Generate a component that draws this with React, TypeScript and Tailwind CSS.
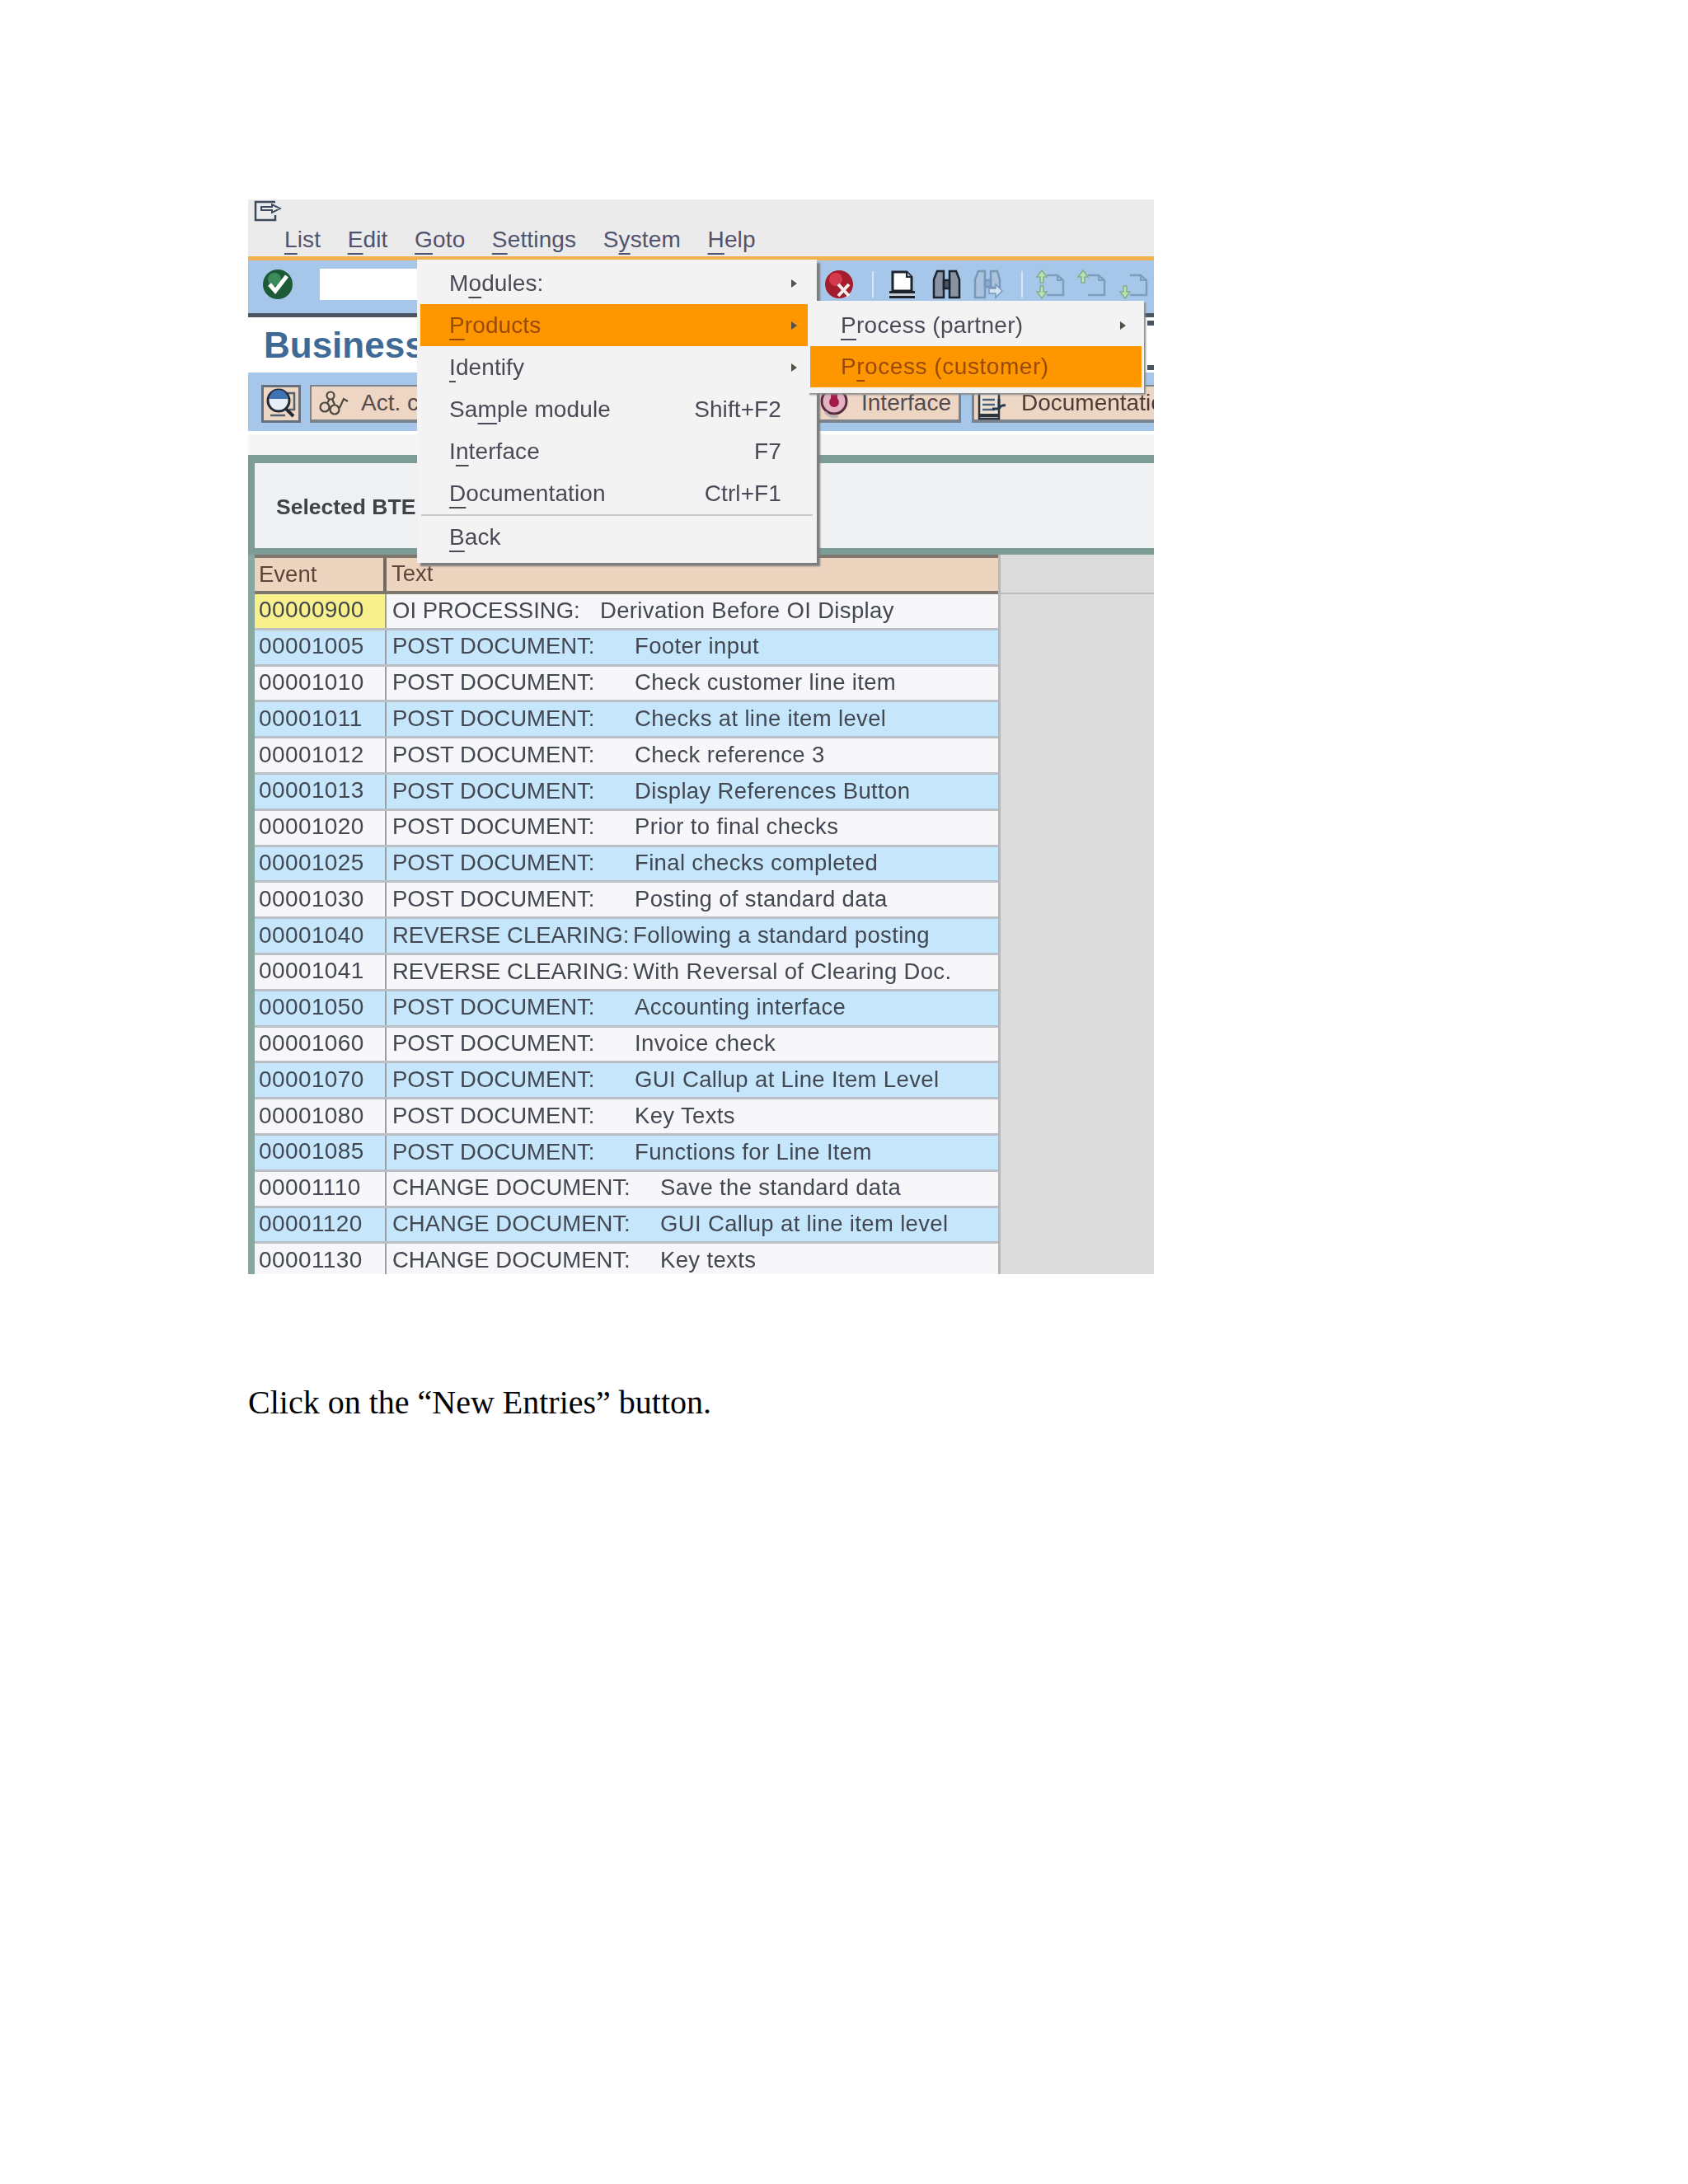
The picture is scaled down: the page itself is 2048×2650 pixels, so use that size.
import React from "react";

const rows = [
  { id: "00000900", label: "OI PROCESSING:", text: "Derivation Before OI Display", w: "w-[252px]", bg: "bg-[#f7f7f9]", idBg: "bg-[#f7f08c]" },
  { id: "00001005", label: "POST DOCUMENT:", text: "Footer input", w: "w-[294px]", bg: "bg-[#c6e7fb]", idBg: "" },
  { id: "00001010", label: "POST DOCUMENT:", text: "Check customer line item", w: "w-[294px]", bg: "bg-[#f7f7f9]", idBg: "" },
  { id: "00001011", label: "POST DOCUMENT:", text: "Checks at line item level", w: "w-[294px]", bg: "bg-[#c6e7fb]", idBg: "" },
  { id: "00001012", label: "POST DOCUMENT:", text: "Check reference 3", w: "w-[294px]", bg: "bg-[#f7f7f9]", idBg: "" },
  { id: "00001013", label: "POST DOCUMENT:", text: "Display References Button", w: "w-[294px]", bg: "bg-[#c6e7fb]", idBg: "" },
  { id: "00001020", label: "POST DOCUMENT:", text: "Prior to final checks", w: "w-[294px]", bg: "bg-[#f7f7f9]", idBg: "" },
  { id: "00001025", label: "POST DOCUMENT:", text: "Final checks completed", w: "w-[294px]", bg: "bg-[#c6e7fb]", idBg: "" },
  { id: "00001030", label: "POST DOCUMENT:", text: "Posting of standard data", w: "w-[294px]", bg: "bg-[#f7f7f9]", idBg: "" },
  { id: "00001040", label: "REVERSE CLEARING:", text: "Following a standard posting", w: "w-[292px]", bg: "bg-[#c6e7fb]", idBg: "" },
  { id: "00001041", label: "REVERSE CLEARING:", text: "With Reversal of Clearing Doc.", w: "w-[292px]", bg: "bg-[#f7f7f9]", idBg: "" },
  { id: "00001050", label: "POST DOCUMENT:", text: "Accounting interface", w: "w-[294px]", bg: "bg-[#c6e7fb]", idBg: "" },
  { id: "00001060", label: "POST DOCUMENT:", text: "Invoice check", w: "w-[294px]", bg: "bg-[#f7f7f9]", idBg: "" },
  { id: "00001070", label: "POST DOCUMENT:", text: "GUI Callup at Line Item Level", w: "w-[294px]", bg: "bg-[#c6e7fb]", idBg: "" },
  { id: "00001080", label: "POST DOCUMENT:", text: "Key Texts", w: "w-[294px]", bg: "bg-[#f7f7f9]", idBg: "" },
  { id: "00001085", label: "POST DOCUMENT:", text: "Functions for Line Item", w: "w-[294px]", bg: "bg-[#c6e7fb]", idBg: "" },
  { id: "00001110", label: "CHANGE DOCUMENT:", text: "Save the standard data", w: "w-[325px]", bg: "bg-[#f7f7f9]", idBg: "" },
  { id: "00001120", label: "CHANGE DOCUMENT:", text: "GUI Callup at line item level", w: "w-[325px]", bg: "bg-[#c6e7fb]", idBg: "" },
  { id: "00001130", label: "CHANGE DOCUMENT:", text: "Key texts", w: "w-[325px]", bg: "bg-[#f7f7f9]", idBg: "" },
];

// underlined mnemonic letter
function Mn({ children }: { children: React.ReactNode }) {
  return <span className="underline decoration-2 underline-offset-[7px]">{children}</span>;
}

function MenuArrow() {
  return <span className="w-0 h-0 border-y-[5px] border-y-transparent border-l-[7px] border-l-[#55504a]" />;
}

function MenuRow({ children, hint, arrow, active }: { children: React.ReactNode; hint?: string; arrow?: boolean; active?: boolean }) {
  return (
    <div className={`flex items-center h-[51px] mx-[4px] pl-[35px] pr-[20px] tracking-[0.1px] ${active ? "bg-[#fe9600] text-[#9a4a08]" : "text-[#4c4956]"}`}>
      <span className="flex-1">{children}</span>
      {hint && <span className="mr-[19px]">{hint}</span>}
      {arrow && <MenuArrow />}
    </div>
  );
}

function ExitIcon() {
  return (
    <svg width="34" height="26" viewBox="0 0 34 26" fill="none" stroke="#3d4a5c" strokeWidth="2.5">
      <path d="M26 2H2v22h24v-6" />
      <path d="M9 8h13V5l10 5-10 5v-3H9z" strokeWidth="2" />
    </svg>
  );
}

function CheckIcon() {
  return (
    <svg width="38" height="38" viewBox="0 0 38 38">
      <circle cx="19" cy="19" r="18" fill="#1c5b36" />
      <circle cx="15" cy="13" r="8" fill="#3d8a5c" />
      <path d="M9 19l7 8L30 9" fill="none" stroke="#fff" strokeWidth="5" />
    </svg>
  );
}

function CancelIcon() {
  return (
    <svg width="36" height="36" viewBox="0 0 36 36">
      <circle cx="18" cy="18" r="17" fill="#a51d2c" />
      <circle cx="14" cy="12" r="8" fill="#d2394a" />
      <path d="M17 18l13 14M30 18L17 32" stroke="#f4f0f0" strokeWidth="4" />
    </svg>
  );
}

function PrintIcon() {
  return (
    <svg width="33" height="36" viewBox="0 0 33 36">
      <path d="M5 3h17l6 6v17H5z" fill="#fff" stroke="#1d2430" strokeWidth="3" />
      <path d="M22 3v6h6" fill="#9fb0c2" stroke="#1d2430" strokeWidth="2" />
      <path d="M1 26h31v3H1z" fill="#1d2430" />
      <path d="M1 29h31v3H1z" fill="#c8ced6" />
      <path d="M1 32h31v3H1z" fill="#1d2430" />
    </svg>
  );
}

function BinocularIcon() {
  return (
    <svg width="35" height="36" viewBox="0 0 35 36" stroke="#1d2430" strokeWidth="2.5">
      <path d="M6 2h8v32H2V12z" fill="#8a93a3" />
      <path d="M21 2h8l4 10v22H21z" fill="#8a93a3" />
      <path d="M14 13h7v10h-7z" fill="#4a5260" />
    </svg>
  );
}

function FindNextIcon() {
  return (
    <svg width="36" height="36" viewBox="0 0 36 36" stroke="#7898ba" strokeWidth="2.5">
      <path d="M6 2h8v32H2V12z" fill="#a9c3dd" />
      <path d="M21 2h8l3 10v10H21z" fill="#a9c3dd" />
      <path d="M14 13h7v8h-7z" fill="#8fabc8" />
      <path d="M19 23h8v-5l8 8-8 8v-5h-8z" fill="#d4e4f2" strokeWidth="1.5" />
    </svg>
  );
}

function PageIcon({ arrow }: { arrow: "both" | "up" | "down" }) {
  return (
    <svg width="36" height="36" viewBox="0 0 36 36" fill="none" stroke="#7c9dbe" strokeWidth="2.5">
      <path d="M14 7h13l7 6v18H14" />
      <path d="M27 7v6h7" strokeWidth="2" />
      {arrow !== "down" && <path d="M8 1L2 9h4v7h4V9h4z" fill="#bfe0b5" stroke="#7fb08a" strokeWidth="1.5" />}
      {arrow !== "up" && <path d="M8 35l-6-8h4v-7h4v7h4z" fill="#bfe0b5" stroke="#7fb08a" strokeWidth="1.5" />}
    </svg>
  );
}

function SearchIcon() {
  return (
    <svg width="38" height="38" viewBox="0 0 38 38" fill="none" stroke="#232a36" strokeWidth="3">
      <path d="M27 6h8v20h-6" strokeWidth="2.5" stroke="#56606c" />
      <circle cx="16" cy="15" r="13" fill="#e8eef6" />
      <path d="M5 13a11 11 0 0 1 22 0z" fill="#3f73b4" stroke="none" />
      <path d="M25 25l9 9" strokeWidth="4" />
      <path d="M6 33h18" strokeWidth="2.5" stroke="#56606c" />
    </svg>
  );
}

function KeysIcon() {
  return (
    <svg width="38" height="32" viewBox="0 0 38 32" fill="none" stroke="#4b4640" strokeWidth="2.2">
      <circle cx="8" cy="21" r="5.5" />
      <circle cx="20" cy="24" r="5.5" />
      <circle cx="15" cy="7" r="4.5" />
      <path d="M11 16l3-5M20 18l-3-7M26 22l5-11 5 3" />
    </svg>
  );
}

function InterfaceIcon() {
  return (
    <svg width="34" height="38" viewBox="0 0 34 38">
      <circle cx="17" cy="17" r="15" fill="#e3b3c2" stroke="#5a2c40" strokeWidth="3" />
      <path d="M13 3h8v12h-8z" fill="#a21c4a" />
      <circle cx="17" cy="18" r="6" fill="#a21c4a" />
      <path d="M6 30a15 15 0 0 0 16 5" fill="none" stroke="#b9b4b4" strokeWidth="3" />
    </svg>
  );
}

function DocIcon() {
  return (
    <svg width="38" height="42" viewBox="0 0 38 42" fill="none" stroke="#2c3440" strokeWidth="2.5">
      <path d="M2 9h24v31H2z" fill="#efe3d6" />
      <path d="M6 17h15M6 23h15M6 29h15" stroke="#4a5f78" />
      <path d="M2 36h24" strokeWidth="4" />
      <path d="M26 1v8" strokeWidth="6" />
      <path d="M18 28h8M26 16v12a7 7 0 0 1 8-4" strokeWidth="3" stroke="#23384f" />
    </svg>
  );
}

export default function App() {
  return (
    <div className="w-[2048px] h-[2650px] bg-white pt-[242px] pl-[301px]">
      {/* screenshot, slightly soft like the scanned original */}
      <div className="relative flex flex-col w-[1099px] h-[1304px] overflow-hidden blur-[0.7px] text-[28px] leading-none font-['Liberation_Sans',Arial,sans-serif]">
        {/* menu bar */}
        <div className="flex flex-col h-[69px] pl-[7px] bg-[#ebebeb]">
          <div className="h-[27px] pt-[1px]">
            <ExitIcon />
          </div>
          <div className="flex gap-[32.5px] pl-[37px] pt-[8px] tracking-[0.15px] text-[#50536e]">
            <span><Mn>L</Mn>ist</span>
            <span><Mn>E</Mn>dit</span>
            <span><Mn>G</Mn>oto</span>
            <span><Mn>S</Mn>ettings</span>
            <span>S<Mn>y</Mn>stem</span>
            <span><Mn>H</Mn>elp</span>
          </div>
        </div>
        <div className="h-[5px] bg-[#f3b04e]" />

        {/* system toolbar */}
        <div className="flex items-center h-[64px] pl-[17px] pb-[6px] bg-[#a6c7e9]">
          <CheckIcon />
          <div className="w-[200px] h-[38px] ml-[32px] shrink-0 bg-white" />
          <div className="ml-[412px]">
            <CancelIcon />
          </div>
          <div className="w-[2px] h-[32px] ml-[22px] shrink-0 bg-[#d8e6f4]" />
          <div className="ml-[18px]"><PrintIcon /></div>
          <div className="ml-[20px]"><BinocularIcon /></div>
          <div className="ml-[15px]"><FindNextIcon /></div>
          <div className="w-[2px] h-[32px] ml-[22px] shrink-0 bg-[#d8e6f4]" />
          <div className="ml-[15px]"><PageIcon arrow="both" /></div>
          <div className="ml-[14px]"><PageIcon arrow="up" /></div>
          <div className="ml-[15px]"><PageIcon arrow="down" /></div>
        </div>
        <div className="h-[5px] bg-[#4a5560]" />

        {/* title */}
        <div className="flex items-center justify-between h-[67px] pl-[19px] bg-white">
          <span className="text-[44px] font-bold text-[#3f6a96]">Business</span>
          <span className="w-[8px] h-[60px] border-y-[6px] border-[#4a5560]" />
        </div>

        {/* application toolbar */}
        <div className="flex items-start h-[71px] pl-[16px] pt-[15px] bg-[#a6c7e9] text-[#57494a]">
          <div className="flex items-center justify-center w-[48px] h-[46px] shrink-0 bg-[#edd6c4] border-[3px] border-[#66707c]">
            <SearchIcon />
          </div>
          <div className="flex items-center w-[200px] h-[46px] ml-[11px] pl-[8px] gap-[14px] shrink-0 bg-[#edd6c4] border-l-[2px] border-t-[2px] border-b-[4px] border-[#7a828c]">
            <KeysIcon />
            <span>Act. c</span>
          </div>
          <div className="flex items-center w-[186px] h-[46px] ml-[404px] pl-[15px] gap-[16px] shrink-0 bg-[#edd6c4] border-r-[3px] border-t-[2px] border-b-[4px] border-[#7a828c]">
            <InterfaceIcon />
            <span>Interface</span>
          </div>
          <div className="flex items-center w-[300px] h-[46px] ml-[13px] pl-[4px] gap-[15px] shrink-0 bg-[#edd6c4] border-l-[3px] border-t-[2px] border-b-[4px] border-[#7a828c] text-[#4f3a36]">
            <DocIcon />
            <span>Documentation</span>
          </div>
        </div>
        <div className="h-[29px] bg-[#f5f5f5] border-t-[4px] border-white" />

        {/* selected BTE panel */}
        <div className="h-[10px] bg-[#7b9d95]" />
        <div className="flex items-center h-[103px] border-l-[8px] border-[#7b9d95] pl-[26px] pt-[4px] bg-[#f0f1f3]">
          <span className="font-bold text-[26.5px] text-[#3f4347]">Selected BTE</span>
        </div>
        <div className="h-[8px] bg-[#7b9d95]" />

        {/* list */}
        <div className="flex flex-1 min-h-0 text-[#424752] text-[27.5px]">
          <div className="w-[910px] shrink-0 border-l-[8px] border-[#86a8a0]">
            <div className="flex h-[48px] bg-[#edd4bf] border-t-[4px] border-b-[4px] border-[#7f776e] text-[#5c463c]">
              <div className="flex items-center w-[160px] pl-[5px] border-r-[4px] border-[#6f6a64]">Event</div>
              <div className="pl-[6px] pt-[5px]">Text</div>
            </div>
            {rows.map((row) => (
              <div key={row.id} className={`flex h-[43.8px] border-b-[3px] border-[#b9bfc4] ${row.bg}`}>
                <div className={`flex items-center w-[160px] pl-[5px] pb-[2px] border-r-[2px] border-[#9a9fa4] text-[28px] tracking-[0.4px] ${row.idBg}`}>{row.id}</div>
                <div className="flex items-center pl-[7px] pb-[2px] whitespace-nowrap">
                  <span className={row.w}>{row.label}</span>
                  <span className="tracking-[0.35px]">{row.text}</span>
                </div>
              </div>
            ))}
          </div>
          <div className="flex-1 bg-[#dcdcdc] border-l-[3px] border-[#b8b8b8]">
            <div className="h-[48px] border-b-[2px] border-[#bcbcbc]" />
          </div>
        </div>

        {/* Goto menu */}
        <div className="absolute left-[205px] top-[73px] flex flex-col w-[485px] h-[368px] pt-[3px] bg-[#f3f3f3] shadow-[4px_4px_2px_#7c7c7c]">
          <MenuRow arrow>M<Mn>o</Mn>dules:</MenuRow>
          <MenuRow arrow active><Mn>P</Mn>roducts</MenuRow>
          <MenuRow arrow><Mn>I</Mn>dentify</MenuRow>
          <MenuRow hint="Shift+F2">Sa<Mn>m</Mn>ple module</MenuRow>
          <MenuRow hint="F7">I<Mn>n</Mn>terface</MenuRow>
          <MenuRow hint="Ctrl+F1"><Mn>D</Mn>ocumentation</MenuRow>
          <div className="h-[2px] mx-[5px] bg-[#c9c9c9]" />
          <MenuRow><Mn>B</Mn>ack</MenuRow>
        </div>

        {/* Products submenu */}
        <div className="absolute left-[679px] top-[123px] flex flex-col w-[408px] h-[112px] pt-[4px] bg-[#f3f3f3] shadow-[2px_2px_2px_#8a8a8a]">
          <div className="flex items-center justify-between h-[51px] pl-[40px] pr-[22px] tracking-[0.3px] text-[#4c4956]">
            <span><Mn>P</Mn>rocess (partner)</span>
            <MenuArrow />
          </div>
          <div className="flex items-center h-[50px] mx-[3px] pl-[37px] tracking-[0.55px] bg-[#fe9600] text-[#9a4a08]">
            <span>P<Mn>r</Mn>ocess (customer)</span>
          </div>
        </div>
      </div>

      <p className="mt-[132px] text-[40px] leading-[48px] text-black font-['Liberation_Serif','Times_New_Roman',serif]">
        Click on the “New Entries” button.
      </p>
    </div>
  );
}
